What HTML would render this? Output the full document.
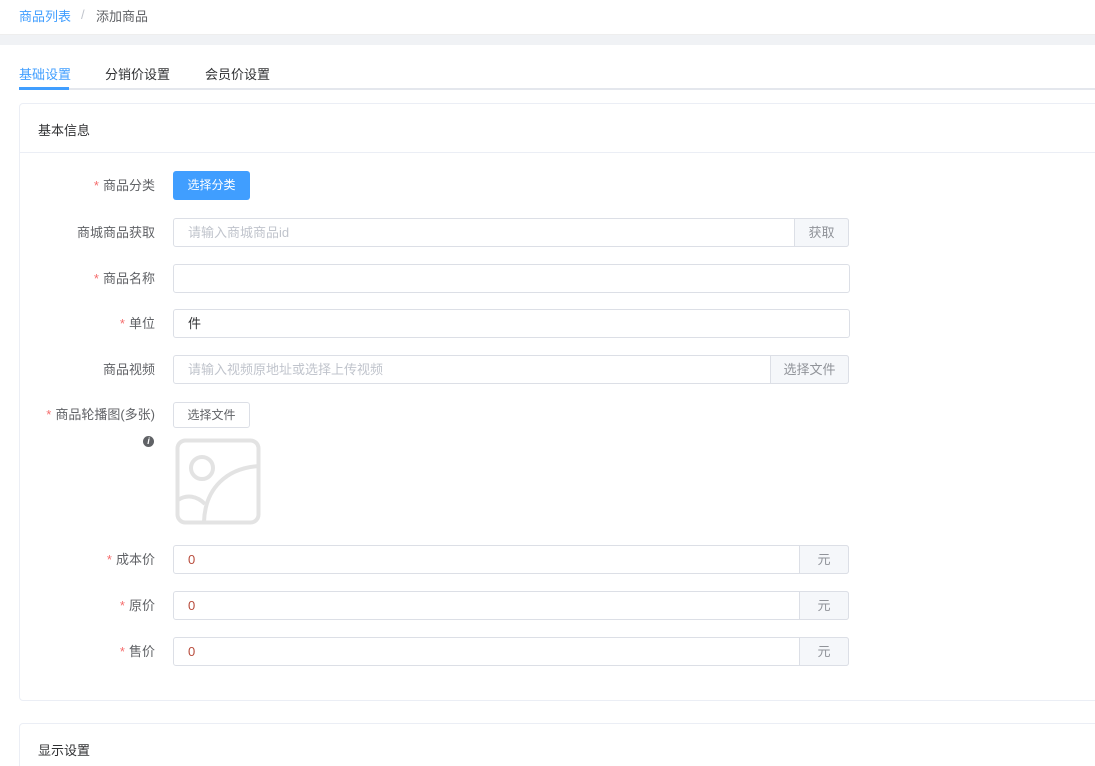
<!DOCTYPE html>
<html><head><meta charset="utf-8"><style>
*{box-sizing:border-box;margin:0;padding:0}
html,body{width:1095px;height:766px;overflow:hidden}
body{background:#fff;font-family:"Liberation Sans","Noto Sans CJK SC",sans-serif;font-size:13px;color:#303133;position:relative}
.a{position:absolute}
.bc{left:0;top:0;width:1095px;height:35px;background:#fff;border-bottom:1px solid #eee}
.gap{left:0;top:35px;width:1095px;height:10px;background:#f0f2f5}
.lbl{position:absolute;right:940px;width:200px;text-align:right;color:#606266;font-size:13px;line-height:29px}
.lbl i{color:#f56c6c;font-style:normal;margin-right:4px}
.inp{position:absolute;left:173px;height:29px;border:1px solid #dcdfe6;border-radius:3px;padding-left:14px;line-height:27px;font-size:13px;background:#fff}
.ph{color:#c0c4cc}
.app{position:absolute;top:-1px;right:-1px;height:29px;border:1px solid #dcdfe6;background:#f5f7fa;color:#909399;text-align:center;line-height:27px;border-radius:0 3px 3px 0}
.red{color:#b84c3c}
</style></head><body>
<div class="a bc"></div>
<div class="a" style="left:19px;top:6px;color:#409eff">商品列表</div>
<div class="a" style="left:81px;top:6px;color:#c0c4cc;line-height:17px">/</div>
<div class="a" style="left:96px;top:6px;color:#606266">添加商品</div>
<div class="a gap"></div>
<div class="a" style="left:19px;top:64px;color:#409eff;font-size:13px">基础设置</div>
<div class="a" style="left:105px;top:64px;font-size:13px">分销价设置</div>
<div class="a" style="left:205px;top:64px;font-size:13px">会员价设置</div>
<div class="a" style="left:19px;top:88px;width:1076px;height:2px;background:#e4e7ed"></div>
<div class="a" style="left:19px;top:87px;width:50px;height:3px;background:#409eff"></div>
<div class="a" style="left:19px;top:103px;width:1090px;height:598px;border:1px solid #ebeef5;border-radius:4px"></div>
<div class="a" style="left:20px;top:152px;width:1075px;height:1px;background:#ebeef5"></div>
<div class="a" style="left:38px;top:120px;font-size:13px">基本信息</div>

<div class="lbl" style="top:171px"><i>*</i>商品分类</div>
<div class="a" style="left:173px;top:171px;width:77px;height:29px;background:#409eff;color:#fff;border-radius:3px;text-align:center;line-height:29px;font-size:12px">选择分类</div>

<div class="lbl" style="top:218px">商城商品获取</div>
<div class="inp" style="top:218px;width:676px"><span class="ph">请输入商城商品id</span><div class="app" style="width:55px">获取</div></div>

<div class="lbl" style="top:264px"><i>*</i>商品名称</div>
<div class="inp" style="top:264px;width:677px"></div>

<div class="lbl" style="top:309px"><i>*</i>单位</div>
<div class="inp" style="top:309px;width:677px">件</div>

<div class="lbl" style="top:355px">商品视频</div>
<div class="inp" style="top:355px;width:676px"><span class="ph">请输入视频原地址或选择上传视频</span><div class="app" style="width:79px">选择文件</div></div>

<div class="lbl" style="top:400px"><i>*</i>商品轮播图(多张)</div>
<div class="a" style="left:173px;top:402px;width:77px;height:26px;border:1px solid #dcdfe6;border-radius:3px;text-align:center;line-height:24px;font-size:12px;color:#606266">选择文件</div>
<div class="a" style="left:143px;top:436px;width:11px;height:11px;border-radius:50%;background:#606266;color:#fff;font-size:9px;line-height:11px;text-align:center;font-style:italic;font-weight:bold">i</div>
<svg class="a" style="left:175px;top:438px" width="86" height="87" viewBox="0 0 86 87"><rect x="2.5" y="2.5" width="81" height="82" rx="8" fill="none" stroke="#e3e3e3" stroke-width="4"/><circle cx="27" cy="30" r="11" fill="none" stroke="#e3e3e3" stroke-width="4"/><path d="M29 84 C30 50 52 30 84 28" fill="none" stroke="#e3e3e3" stroke-width="4"/><path d="M3 62 C12 56 22 58 30 66" fill="none" stroke="#e3e3e3" stroke-width="4"/></svg>

<div class="lbl" style="top:545px"><i>*</i>成本价</div>
<div class="inp red" style="top:545px;width:676px">0<div class="app" style="width:50px">元</div></div>
<div class="lbl" style="top:591px"><i>*</i>原价</div>
<div class="inp red" style="top:591px;width:676px">0<div class="app" style="width:50px">元</div></div>
<div class="lbl" style="top:637px"><i>*</i>售价</div>
<div class="inp red" style="top:637px;width:676px">0<div class="app" style="width:50px">元</div></div>

<div class="a" style="left:19px;top:723px;width:1090px;height:60px;border:1px solid #ebeef5;border-radius:4px"></div>
<div class="a" style="left:38px;top:740px;font-size:13px">显示设置</div>
</body></html>
